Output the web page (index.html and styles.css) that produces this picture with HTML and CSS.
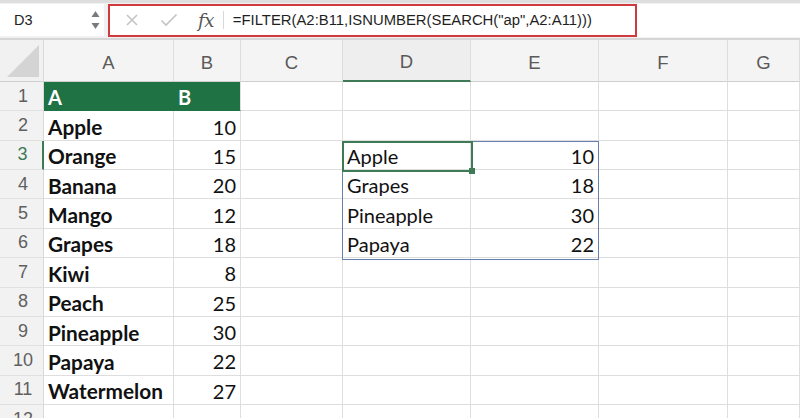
FILE: index.html
```html
<!DOCTYPE html>
<html>
<head>
<meta charset="utf-8">
<link rel="stylesheet" href="styles.css">
</head>
<body>
<div class="toolbar">
  <div class="namebox">
    <span class="nb-text">D3</span>
    <span class="spin">
      <svg width="9" height="20" viewBox="0 0 9 20"><polygon points="4.5,1 8.5,7 0.5,7" fill="#7a7a7a"/><polygon points="0.5,13 8.5,13 4.5,19" fill="#7a7a7a"/></svg>
    </span>
  </div>
  <div class="fbar">
    <div class="fbox">
      <span class="ic ic-x"><svg width="14" height="14" viewBox="0 0 14 14"><path d="M2 2 L12 12 M12 2 L2 12" stroke="#c4c4c4" stroke-width="1.6" fill="none"/></svg></span>
      <span class="ic ic-ok"><svg width="18" height="14" viewBox="0 0 18 14"><path d="M1.5 7.5 L6 12 L16.5 1.5" stroke="#c4c4c4" stroke-width="1.6" fill="none"/></svg></span>
      <span class="fx">fx</span>
      <span class="sep"></span>
      <span class="ftext">=FILTER(A2:B11,ISNUMBER(SEARCH("ap",A2:A11)))</span>
    </div>
  </div>
</div>
<div class="sheet">
  <div class="corner"><span class="tri"></span></div>
  <div class="ch">A</div><div class="ch">B</div><div class="ch">C</div><div class="ch ch-sel">D</div><div class="ch">E</div><div class="ch">F</div><div class="ch">G</div>

  <div class="rh">1</div><div class="c hd">A</div><div class="c hd hdb">B</div><div class="c"></div><div class="c"></div><div class="c"></div><div class="c"></div><div class="c"></div>
  <div class="rh">2</div><div class="c b">Apple</div><div class="c n">10</div><div class="c"></div><div class="c"></div><div class="c"></div><div class="c"></div><div class="c"></div>
  <div class="rh rh-sel">3</div><div class="c b">Orange</div><div class="c n">15</div><div class="c"></div><div class="c t">Apple</div><div class="c n">10</div><div class="c"></div><div class="c"></div>
  <div class="rh">4</div><div class="c b">Banana</div><div class="c n">20</div><div class="c"></div><div class="c t">Grapes</div><div class="c n">18</div><div class="c"></div><div class="c"></div>
  <div class="rh">5</div><div class="c b">Mango</div><div class="c n">12</div><div class="c"></div><div class="c t">Pineapple</div><div class="c n">30</div><div class="c"></div><div class="c"></div>
  <div class="rh">6</div><div class="c b">Grapes</div><div class="c n">18</div><div class="c"></div><div class="c t">Papaya</div><div class="c n">22</div><div class="c"></div><div class="c"></div>
  <div class="rh">7</div><div class="c b">Kiwi</div><div class="c n">8</div><div class="c"></div><div class="c"></div><div class="c"></div><div class="c"></div><div class="c"></div>
  <div class="rh">8</div><div class="c b">Peach</div><div class="c n">25</div><div class="c"></div><div class="c"></div><div class="c"></div><div class="c"></div><div class="c"></div>
  <div class="rh">9</div><div class="c b">Pineapple</div><div class="c n">30</div><div class="c"></div><div class="c"></div><div class="c"></div><div class="c"></div><div class="c"></div>
  <div class="rh">10</div><div class="c b">Papaya</div><div class="c n">22</div><div class="c"></div><div class="c"></div><div class="c"></div><div class="c"></div><div class="c"></div>
  <div class="rh">11</div><div class="c b">Watermelon</div><div class="c n">27</div><div class="c"></div><div class="c"></div><div class="c"></div><div class="c"></div><div class="c"></div>
  <div class="rh">12</div><div class="c"></div><div class="c"></div><div class="c"></div><div class="c"></div><div class="c"></div><div class="c"></div><div class="c"></div>

  <div class="spill"></div>
  <div class="active"><span class="handle"></span></div>
</div>
</body>
</html>
```
FILE: styles.css
```css
html, body {
  margin: 0;
  padding: 0;
}
body {
  width: 800px;
  height: 418px;
  overflow: hidden;
  background: #ffffff;
  font-family: "Liberation Sans", Arial, sans-serif;
}
.toolbar {
  height: 40px;
  box-sizing: border-box;
  background: #f1f1f1;
  border-top: 3px solid #dedede;
  border-bottom: 2px solid #d6d6d6;
  display: flex;
  align-items: center;
  padding-bottom: 1px;
}
.namebox {
  width: 104px;
  height: 32px;
  background: #ffffff;
  display: flex;
  align-items: center;
  justify-content: space-between;
  padding: 0 4px 0 14px;
  box-sizing: border-box;
}
.nb-text {
  font-size: 14.5px;
  color: #222;
}
.spin {
  display: flex;
  align-items: center;
}
.fbar {
  flex: 1;
  margin-left: 4px;
  height: 33px;
  background: #ffffff;
  display: flex;
}
.fbox {
  width: 529px;
  box-sizing: border-box;
  border: 2px solid #cf3a3e;
  display: flex;
  align-items: center;
}
.ic {
  display: flex;
  align-items: center;
}
.ic-x {
  margin-left: 15px;
}
.ic-ok {
  margin-left: 21px;
}
.fx {
  margin-left: 20px;
  font-family: "DejaVu Serif", "Liberation Serif", serif;
  font-style: italic;
  font-size: 18px;
  color: #555;
  letter-spacing: -0.5px;
}
.sep {
  width: 1px;
  height: 18px;
  background: #d8d8d8;
  margin-left: 9px;
}
.ftext {
  margin-left: 9px;
  font-size: 14.85px;
  color: #1f1f1f;
  white-space: nowrap;
}
.sheet {
  position: relative;
  display: grid;
  grid-template-columns: 44px 130px 67px 102px 128px 128px 129px 72px;
  grid-template-rows: 42px;
  grid-auto-rows: 29.36px;
}
.corner {
  background: #f1f1f1;
  border-right: 1px solid #d9d9d9;
  border-bottom: 1px solid #cfcfcf;
  position: relative;
}
.tri {
  position: absolute;
  right: 4px;
  bottom: 4px;
  width: 32px;
  height: 32px;
  background: #d4d4d4;
  clip-path: polygon(100% 0, 100% 100%, 0 100%);
}
.ch {
  background: #f4f4f4;
  border-right: 1px solid #dedede;
  border-bottom: 1px solid #cfcfcf;
  display: flex;
  align-items: center;
  justify-content: center;
  font-size: 18.5px;
  color: #5a5a5a;
  box-sizing: border-box;
  padding-top: 4px;
}
.ch-sel {
  border-bottom: 2px solid #3f7a57;
  background: #eeeeee;
}
.rh {
  background: #f2f2f2;
  border-right: 1px solid #d9d9d9;
  border-bottom: 1px solid #e0e0e0;
  display: flex;
  align-items: center;
  justify-content: center;
  font-size: 18px;
  color: #5f5f5f;
  box-sizing: border-box;
  padding-left: 3px;
}
.rh-sel {
  color: #3f7a57;
  border-right: 2px solid #3f7a57;
}
.c {
  border-right: 1px solid #dedede;
  border-bottom: 1px solid #dedede;
  box-sizing: border-box;
  display: flex;
  align-items: center;
  font-family: Lato, "Liberation Sans", sans-serif;
  font-size: 20px;
  color: #111;
  padding: 2px 4px 0 4px;
  white-space: nowrap;
}
.b {
  font-weight: bold;
  font-size: 20.8px;
}
.n {
  justify-content: flex-end;
  padding-right: 4px;
}
.hd {
  background: #1f7244;
  color: #ffffff;
  font-weight: bold;
  border-right-color: #1f7244;
  border-bottom-color: #1f7244;
}
.hdb {
  border-right-color: #dedede;
}
.spill {
  position: absolute;
  left: 342px;
  top: 101px;
  width: 257px;
  height: 119px;
  box-sizing: border-box;
  border: 1.5px solid #6680b0;
  pointer-events: none;
}
.active {
  position: absolute;
  left: 342px;
  top: 100.5px;
  width: 131px;
  height: 31px;
  box-sizing: border-box;
  border: 2px solid #3f7a57;
  pointer-events: none;
}
.handle {
  position: absolute;
  right: -4px;
  bottom: -4px;
  width: 6px;
  height: 6px;
  background: #3f7a57;
}
```
